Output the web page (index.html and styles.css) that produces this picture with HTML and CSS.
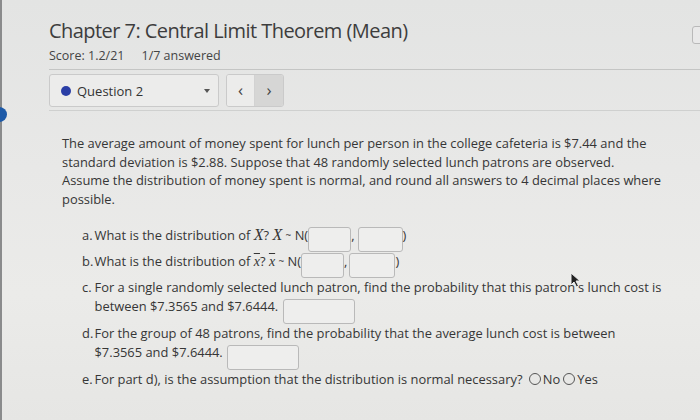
FILE: index.html
```html
<!DOCTYPE html>
<html>
<head>
<meta charset="utf-8">
<link rel="stylesheet" href="styles.css">
</head>
<body>
<div class="page">
  <div class="edge"></div>
  <div class="edge-dot"></div>
  <div class="corner-btn"></div>
  <header class="head">
    <h1 class="title">Chapter 7: Central Limit Theorem (Mean)</h1>
    <div class="score"><span>Score: 1.2/21</span><span>1/7 answered</span></div>
  </header>
  <div class="toolbar">
    <div class="qselect">
      <span class="dot"></span>
      <span class="qlabel">Question 2</span>
      <span class="caret"></span>
    </div>
    <div class="navgroup">
      <span class="nav prev">&lsaquo;</span>
      <span class="nav next">&rsaquo;</span>
    </div>
  </div>
  <main class="question">
    <p class="intro">The average amount of money spent for lunch per person in the college cafeteria is $7.44 and the<br>standard deviation is $2.88. Suppose that 48 randomly selected lunch patrons are observed.<br>Assume the distribution of money spent is normal, and round all answers to 4 decimal places where<br>possible.</p>
    <ol class="parts">
      <li class="part"><span class="lbl">a.</span><span class="txt">What is the distribution of <span class="m">X</span>? <span class="m">X</span> <span class="tilde">~</span> N(<span class="box sm w43"></span>,<span class="box sm w45"></span>)</span></li>
      <li class="part"><span class="lbl">b.</span><span class="txt">What is the distribution of <span class="m bar">x</span>? <span class="m bar">x</span> <span class="tilde">~</span> N(<span class="box sm w43"></span>,<span class="box sm w46"></span>)</span></li>
      <li class="part"><span class="lbl">c.</span><span class="txt">For a single randomly selected lunch patron, find the probability that this patron's lunch cost is between $7.3565 and $7.6444. <span class="box lg"></span></span></li>
      <li class="part"><span class="lbl">d.</span><span class="txt">For the group of 48 patrons, find the probability that the average lunch cost is between $7.3565 and $7.6444. <span class="box lg"></span></span></li>
      <li class="part"><span class="lbl">e.</span><span class="txt">For part d), is the assumption that the distribution is normal necessary? <span class="radio"></span>No<span class="radio"></span>Yes</span></li>
    </ol>
  </main>
  <svg class="cursor" width="12" height="16" viewBox="0 0 12 16"><path d="M1 1 L1 13 L4 10 L6.5 15 L8.5 14 L6 9 L10 9 Z" fill="#222" stroke="#eee" stroke-width="1"/></svg>
</div>
</body>
</html>
```
FILE: styles.css
```css
html, body {
  margin: 0;
  padding: 0;
}
body {
  width: 700px;
  height: 420px;
  overflow: hidden;
  font-family: "Open Sans", "Noto Sans", sans-serif;
  color: #3a3a3a;
  background: linear-gradient(180deg, #e3e4e3 0%, #e8e8e7 40%, #ebebe9 70%, #e6e6e4 100%);
}
.page {
  position: relative;
  width: 700px;
  height: 420px;
  padding-left: 49px;
  box-sizing: border-box;
}
.edge {
  position: absolute;
  left: 0;
  top: 0;
  width: 2px;
  height: 420px;
  background: #8a8b8c;
}
.edge-dot {
  position: absolute;
  left: -8px;
  top: 107px;
  width: 15px;
  height: 15px;
  border-radius: 50%;
  background: #1d5aa8;
}
.corner-btn {
  position: absolute;
  left: 692px;
  top: 26px;
  width: 24px;
  height: 16px;
  border: 1px solid #b9b9b9;
  border-radius: 3px;
  background: #e9e9e9;
}
.head {
  padding-top: 17px;
}
.title {
  margin: 0;
  font-weight: 400;
  font-size: 20px;
  line-height: 28px;
  color: #3d3d3d;
  letter-spacing: -0.55px;
}
.score {
  display: flex;
  gap: 17px;
  font-size: 12.5px;
  line-height: 18px;
  margin-top: 2px;
  color: #444;
}
.toolbar {
  margin-top: 4px;
  border-top: 1px solid #c4c5c4;
  border-bottom: 1px solid #cfd0cf;
  padding: 4px 0 3px;
  display: flex;
  gap: 7px;
}
.qselect {
  width: 170px;
  height: 33px;
  box-sizing: border-box;
  border: 1px solid #cacaca;
  border-radius: 3px;
  background: #ececeb;
  display: flex;
  align-items: center;
  padding-left: 11px;
}
.dot {
  width: 10px;
  height: 10px;
  border-radius: 50%;
  background: #2a3ea6;
  margin-right: 6px;
}
.qlabel {
  font-size: 13px;
  color: #333;
  flex: 1;
}
.caret {
  width: 0;
  height: 0;
  border-left: 3.5px solid transparent;
  border-right: 3.5px solid transparent;
  border-top: 4px solid #555;
  margin-right: 8px;
}
.navgroup {
  display: flex;
  height: 33px;
  border: 1px solid #cacaca;
  border-radius: 3px;
  overflow: hidden;
  box-sizing: border-box;
}
.nav {
  width: 28px;
  display: flex;
  align-items: center;
  justify-content: center;
  font-size: 17px;
  color: #444;
  line-height: 1;
  padding-bottom: 2px;
  box-sizing: border-box;
}
.prev {
  background: #ececeb;
  border-right: 1px solid #d2d2d2;
}
.next {
  background: #d6d6d5;
}
.question {
  padding-left: 13px;
  padding-top: 23px;
  width: 630px;
}
.intro {
  margin: 0;
  font-size: 12.9px;
  line-height: 18.5px;
  color: #363636;
}
.parts {
  list-style: none;
  margin: 18px 0 0;
  padding: 0 0 0 20px;
  width: 581px;
  font-size: 12.9px;
  color: #363636;
}
.part {
  display: flex;
  line-height: 19px;
}
.lbl {
  width: 12.5px;
  flex: none;
}
.txt {
  flex: 1;
}
.m {
  font-family: "Liberation Serif", "DejaVu Serif", serif;
  font-style: italic;
  font-size: 16px;
  line-height: 0;
}
.bar {
  text-decoration: overline;
  font-size: 14px;
}
.tilde {
  font-size: 10px;
  vertical-align: 1px;
  line-height: 0;
}
.box {
  display: inline-block;
  height: 25px;
  box-sizing: border-box;
  border: 1px solid #b9b9b9;
  border-radius: 3px;
  background: #eeeeed;
}
.sm {
  vertical-align: -12px;
}
.lg {
  width: 72px;
  margin-left: 1px;
  vertical-align: -13px;
}
.w43 { width: 43px; }
.w45 { width: 45px; margin-left: 3px; }
.w46 { width: 46px; margin-left: 2px; }
.radio {
  display: inline-block;
  width: 10px;
  height: 10px;
  border: 1px solid #555;
  border-radius: 50%;
  margin: 0 2px 0 3px;
  vertical-align: -1px;
}
.cursor {
  position: absolute;
  left: 570px;
  top: 272px;
}
```
